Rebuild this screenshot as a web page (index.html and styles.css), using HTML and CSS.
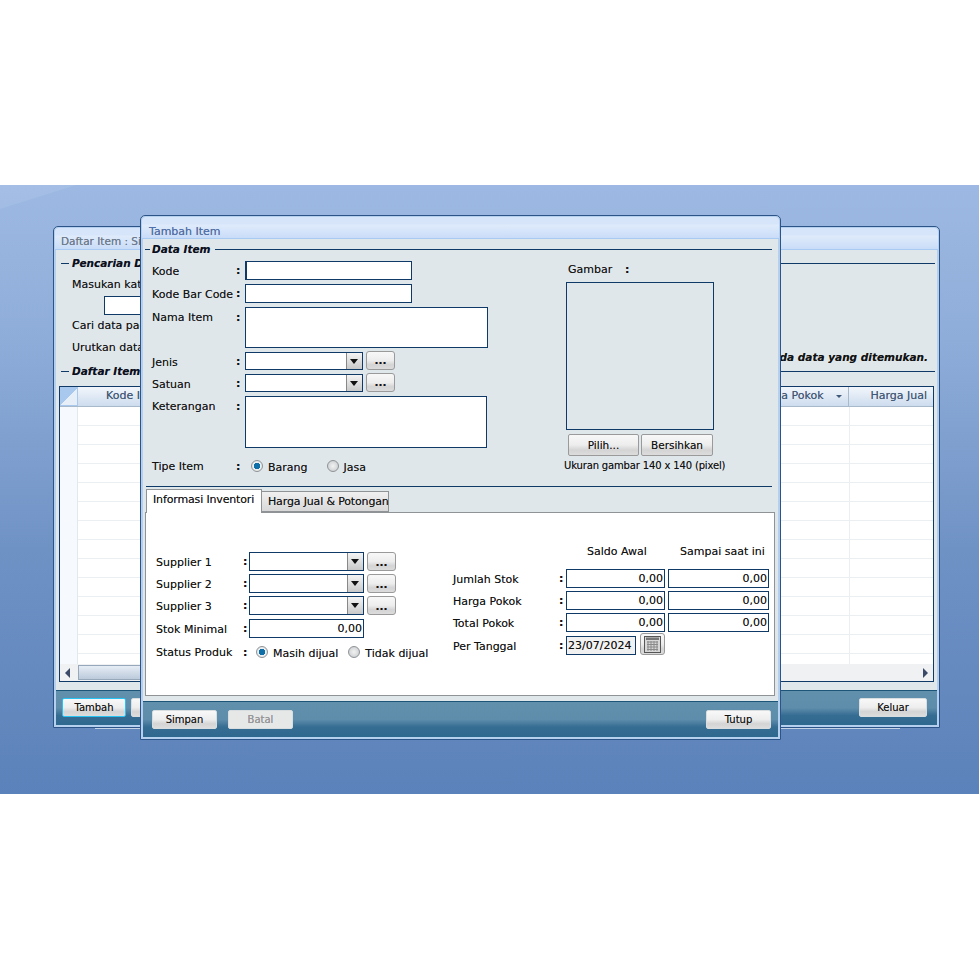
FILE: index.html
```html
<!DOCTYPE html>
<html lang="en">
<head>
    <meta charset="UTF-8">
    <title>Tambah Item</title>
    <link rel="stylesheet" href="styles.css">
</head>
<body>
    <div class="desktop">
        <div class="swoosh"></div>
        <div class="under-line"></div>

        <!-- Window behind: Daftar Item -->
        <div class="window window-back">
            <div class="titlebar">Daftar Item : Sistem</div>
            <div class="window-body">
                <div class="legend"><span>Pencarian Data</span></div>
                <div class="search-area">
                    <div class="search-label">Masukan kata kunci</div>
                    <div class="search-input"></div>
                    <div class="search-label">Cari data pada</div>
                    <div class="search-label">Urutkan data</div>
                    <div class="no-data">Tidak ada data yang ditemukan.</div>
                </div>
                <div class="legend"><span>Daftar Item</span></div>
                <div class="grid">
                    <div class="grid-head">
                        <div class="corner"></div>
                        <div class="head-cell head-kode">Kode Item</div>
                        <div class="head-cell head-pokok">Harga Pokok <i class="sort"></i></div>
                        <div class="head-cell head-jual">Harga Jual</div>
                    </div>
                    <div class="grid-body">
                        <div class="col-num"></div>
                        <div class="col-main"></div>
                        <div class="col-jual"></div>
                    </div>
                    <div class="scrollbar">
                        <i class="arrow-left"></i>
                        <div class="thumb"></div>
                        <i class="arrow-right"></i>
                    </div>
                </div>
            </div>
            <div class="footer">
                <button class="btn btn-active">Tambah</button>
                <button class="btn">Ubah</button>
                <button class="btn btn-keluar">Keluar</button>
            </div>
        </div>

        <!-- Front window: Tambah Item -->
        <div class="window window-front">
            <div class="titlebar">Tambah Item</div>
            <div class="window-body">
                <div class="legend"><span>Data Item</span></div>
                <div class="data-item">
                    <div class="data-form">
                        <div class="row row-19"><label>Kode</label><b>:</b><div class="input input-short has-caret"></div></div>
                        <div class="row row-19"><label>Kode Bar Code</label><b>:</b><div class="input input-short"></div></div>
                        <div class="row row-41"><label>Nama Item</label><b>:</b><div class="input input-wide"></div></div>
                        <div class="row row-18">
                            <label>Jenis</label><b>:</b>
                            <div class="combo"><i class="combo-btn"></i></div>
                            <button class="btn btn-dots">...</button>
                        </div>
                        <div class="row row-18">
                            <label>Satuan</label><b>:</b>
                            <div class="combo"><i class="combo-btn"></i></div>
                            <button class="btn btn-dots">...</button>
                        </div>
                        <div class="row row-52"><label>Keterangan</label><b>:</b><div class="input input-ket"></div></div>
                        <div class="row row-tipe">
                            <label>Tipe Item</label><b>:</b>
                            <span class="radio radio-on"></span><span class="radio-text">Barang</span>
                            <span class="radio radio-jasa"></span><span class="radio-text">Jasa</span>
                        </div>
                    </div>
                    <div class="picture">
                        <div class="picture-label"><span>Gambar</span><b>:</b></div>
                        <div class="picture-box"></div>
                        <div class="picture-btns">
                            <button class="btn btn-pilih">Pilih...</button>
                            <button class="btn btn-bersih">Bersihkan</button>
                        </div>
                        <div class="picture-note">Ukuran gambar 140 x 140 (pixel)</div>
                    </div>
                </div>
                <div class="separator"></div>

                <div class="tabs">
                    <div class="tab tab-active">Informasi Inventori</div>
                    <div class="tab">Harga Jual &amp; Potongan</div>
                </div>
                <div class="tab-panel">
                    <div class="panel-left">
                        <div class="row row-19"><label>Supplier 1</label><b>:</b><div class="combo combo-19"><i class="combo-btn"></i></div><button class="btn btn-dots">...</button></div>
                        <div class="row row-19"><label>Supplier 2</label><b>:</b><div class="combo combo-19"><i class="combo-btn"></i></div><button class="btn btn-dots">...</button></div>
                        <div class="row row-19 row-gap"><label>Supplier 3</label><b>:</b><div class="combo combo-19"><i class="combo-btn"></i></div><button class="btn btn-dots">...</button></div>
                        <div class="row row-19"><label>Stok Minimal</label><b>:</b><div class="input input-num input-stok">0,00</div></div>
                        <div class="row row-status">
                            <label>Status Produk</label><b>:</b>
                            <span class="radio radio-on"></span><span class="radio-text">Masih dijual</span>
                            <span class="radio radio-tidak"></span><span class="radio-text">Tidak dijual</span>
                        </div>
                    </div>
                    <div class="panel-right">
                        <div class="stock-head"><span class="head-awal">Saldo Awal</span><span class="head-kini">Sampai saat ini</span></div>
                        <div class="row row-19"><label>Jumlah Stok</label><b>:</b><div class="input input-num input-awal">0,00</div><div class="input input-num input-kini">0,00</div></div>
                        <div class="row row-19"><label>Harga Pokok</label><b>:</b><div class="input input-num input-awal">0,00</div><div class="input input-num input-kini">0,00</div></div>
                        <div class="row row-19 row-gap"><label>Total Pokok</label><b>:</b><div class="input input-num input-awal">0,00</div><div class="input input-num input-kini">0,00</div></div>
                        <div class="row row-19">
                            <label>Per Tanggal</label><b>:</b>
                            <div class="input input-date">23/07/2024</div>
                            <button class="btn btn-cal">
                                <svg width="17" height="17" viewBox="0 0 17 17">
                                    <rect x="0.5" y="0.5" width="16" height="16" fill="#d8d8d8" stroke="#555"/>
                                    <rect x="2" y="1.5" width="13" height="2.5" fill="#777"/>
                                    <path d="M3 6h11M3 8.5h11M3 11h11M3 13.5h11M4 5v10M7 5v10M10 5v10M13 5v10" stroke="#8a8a8a" stroke-width="1" fill="none"/>
                                </svg>
                            </button>
                        </div>
                    </div>
                </div>
            </div>
            <div class="footer">
                <button class="btn">Simpan</button>
                <button class="btn btn-disabled">Batal</button>
                <button class="btn btn-tutup">Tutup</button>
            </div>
        </div>
    </div>
</body>
</html>
```

FILE: styles.css
```css
* {
    box-sizing: border-box;
}

body {
    margin: 0;
    background: #fff;
    font-family: "DejaVu Sans", sans-serif;
    font-size: 11px;
    color: #111;
    text-shadow: 0 0 0.4px rgba(0, 0, 0, 0.45);
}

.desktop {
    position: relative;
    height: 609px;
    margin-top: 185px;
    overflow: hidden;
    background: linear-gradient(#9db9e3 0%, #8fadd9 25%, #6f92c5 60%, #5b82ba 100%);
}

.swoosh {
    position: absolute;
    left: 0;
    top: 0;
    width: 76px;
    height: 24px;
    background: rgba(255, 255, 255, 0.08);
    clip-path: polygon(0 0, 100% 0, 0 100%);
}

.under-line {
    position: absolute;
    left: 95px;
    top: 543px;
    width: 805px;
    height: 1px;
    background: #c4d2e6;
}

.window {
    position: absolute;
    display: flex;
    flex-direction: column;
    background: #e0e7eb;
    border: 1px solid #2c5488;
    border-radius: 5px 5px 0 0;
    box-shadow: inset 0 0 0 2px #b5cfee;
}

.window-back {
    left: 53px;
    top: 41px;
    width: 887px;
    height: 502px;
}

.window-front {
    left: 140px;
    top: 30px;
    width: 641px;
    height: 525px;
}

.titlebar {
    flex: none;
    height: 22px;
    margin: 1px 1px 0;
    padding: 6px 6px 0;
    border-bottom: 1px solid #a9caf3;
    border-radius: 4px 4px 0 0;
    background: linear-gradient(#d6e5fa 0, #d6e5fa 7px, #dfebfb 8px, #c9dcf8 100%);
    color: #6f7c8e;
    font-size: 10.5px;
    line-height: 14px;
    white-space: nowrap;
}

.window-front .titlebar {
    padding: 8px 7px 0;
    color: #4f70ae;
    font-size: 11px;
}

.window-body {
    flex: 1;
    min-height: 0;
    padding: 0 3px 0 4px;
}

.legend {
    display: flex;
    align-items: center;
    gap: 3px;
    height: 14px;
    font-weight: bold;
    font-style: italic;
    font-size: 10.5px;
    color: #0a0f20;
}

.legend::before {
    content: "";
    flex: none;
    width: 8px;
    height: 1px;
    background: #0f3a68;
}

.legend::after {
    content: "";
    flex: 1;
    height: 1px;
    margin-left: 2px;
    background: #0f3a68;
}

.window-front .legend {
    gap: 2px;
    margin: 3px 5px 0 0;
}

.window-front .legend::before {
    width: 5px;
}

/* back window */
.window-back .window-body {
    padding: 0 4px 0 7px;
}

.window-back .legend:first-child {
    margin-top: 6px;
}

.search-area {
    position: relative;
    height: 94px;
    padding: 4px 0 0 11px;
}

.search-label {
    height: 22px;
    line-height: 22px;
    white-space: nowrap;
}

.search-input {
    width: 150px;
    height: 19px;
    margin-left: 32px;
    background: #fff;
    border: 1px solid #0f3a68;
}

.no-data {
    position: absolute;
    right: 7px;
    top: 81px;
    font-size: 10.5px;
    font-weight: bold;
    font-style: italic;
}

.grid {
    display: flex;
    flex-direction: column;
    height: 296px;
    width: 875px;
    margin: 8px 0 0 -2px;
    border: 1px solid #0f3a68;
    background: #fff;
}

.grid-head {
    flex: none;
    display: flex;
    height: 20px;
    border-bottom: 1px solid #a9b9cc;
    background: linear-gradient(#f2f6fb, #cddcee);
    color: #3f5878;
    line-height: 18px;
}

.corner {
    flex: none;
    width: 18px;
    background: linear-gradient(135deg, #a9c8ee 50%, #e6eef8 50%);
    border: 1px solid #a9c8ee;
}

.head-cell {
    padding: 0 3px;
    white-space: nowrap;
}

.head-kode {
    flex: 1;
    padding-left: 28px;
}

.head-pokok {
    flex: none;
    width: 120px;
    padding-left: 26px;
    text-align: left;
    border-right: 1px solid #a9b9cc;
    overflow: hidden;
}

.sort {
    display: inline-block;
    margin-left: 9px;
    vertical-align: middle;
    border: 3px solid transparent;
    border-top-color: #3f5878;
    border-bottom: 0;
}

.head-jual {
    flex: none;
    width: 84px;
    text-align: right;
    padding-right: 6px;
}

.grid-body {
    flex: 1;
    display: flex;
    min-height: 0;
    background: repeating-linear-gradient(#fff 0, #fff 18px, #eceff2 18px, #eceff2 19px);
}

.col-num {
    flex: none;
    width: 18px;
    background: #f6f9fe;
    border-right: 1px solid #e3e8ee;
}

.col-main {
    flex: 1;
}

.col-jual {
    flex: none;
    width: 84px;
    border-left: 1px solid #eceff2;
}

.scrollbar {
    flex: none;
    display: flex;
    align-items: center;
    height: 17px;
    background: #f0f1f2;
}

.thumb {
    flex: none;
    width: 500px;
    height: 15px;
    margin-left: 8px;
    border: 1px solid #97a8bb;
    background: linear-gradient(#e6edf5, #bccadb);
}

.arrow-left {
    flex: none;
    margin-left: 5px;
    border: 5px solid transparent;
    border-left: 0;
    border-right-color: #3b4a68;
}

.arrow-right {
    flex: none;
    margin-left: auto;
    margin-right: 5px;
    border: 5px solid transparent;
    border-right: 0;
    border-left-color: #3b4a68;
}

.footer {
    position: relative;
    flex: none;
    display: flex;
    align-items: flex-start;
    height: 36px;
    margin: 0 2px 2px;
    padding: 8px 0 0 9px;
    border-top: 1px solid #1d5579;
    background: linear-gradient(#6190ad 0, #5e8dab 50%, #356c92 72%, #2f688f 100%);
}

.window-back .footer {
    height: 35px;
    padding: 7px 0 0 6px;
}

.btn {
    height: 19px;
    padding: 0;
    border: 1px solid #9a9a9a;
    border-radius: 2px;
    background: linear-gradient(#f8f8f8 0, #ededed 50%, #d4d4d4 75%, #dcdcdc 100%);
    font-family: inherit;
    font-size: 10.5px;
    color: #111;
    text-shadow: inherit;
}

.footer .btn {
    width: 65px;
    border-color: #d8dde0;
    margin-right: 11px;
    font-size: 10px;
}

.footer .btn-active {
    width: 64px;
    border: 1px solid #27c3f2;
    margin-right: 5px;
}

.footer .btn-keluar {
    width: 68px;
    margin: 0 10px 0 auto;
}

.footer .btn-tutup {
    margin: 0 7px 0 auto;
}

.footer .btn-disabled {
    background: #e6e8e8;
    color: #9a9a9a;
}

/* form rows */
.row {
    display: flex;
    align-items: center;
    margin-bottom: 3px;
}

.row-gap {
    margin-bottom: 4px;
}

.row label {
    flex: none;
    white-space: nowrap;
}

.row b {
    flex: none;
    font-weight: bold;
}

.row-19 { height: 19px; }
.row-18 { height: 18px; }
.row-41 { height: 41px; align-items: flex-start; }
.row-52 { height: 52px; align-items: flex-start; }

.input {
    flex: none;
    height: 100%;
    background: #fff;
    border: 1px solid #0f3a68;
    line-height: 17px;
    padding: 0 1px;
}

.input-short { width: 167px; }
.input-wide { width: 243px; }
.input-ket { width: 242px; }
.input-num { text-align: right; }

.has-caret {
    border-left-width: 2px;
}

.combo {
    position: relative;
    flex: none;
    width: 118px;
    height: 18px;
    background: #fff;
    border: 1px solid #0f3a68;
}

.combo-19 {
    width: 115px;
    height: 19px;
}

.combo-btn {
    position: absolute;
    right: 0;
    top: 0;
    bottom: 0;
    width: 16px;
    border-left: 1px solid #888;
    background: linear-gradient(#f4f4f4, #c9c9c9);
}

.combo-btn::after {
    content: "";
    position: absolute;
    left: 3px;
    top: 6px;
    border: 4px solid transparent;
    border-top: 5px solid #111;
    border-bottom: 0;
}

.btn-dots {
    flex: none;
    width: 29px;
    height: 19px;
    margin-left: 3px;
    border-radius: 3px;
    font-weight: bold;
    line-height: 14px;
}

/* data item */
.data-item {
    display: flex;
    height: 230px;
}

.data-form {
    flex: none;
    width: 421px;
    padding: 5px 0 0 7px;
}

.data-form .row {
    margin-bottom: 4px;
}

.data-form .row label {
    width: 84px;
}

.data-form .row b {
    width: 9px;
}

.data-form .row-19 label,
.data-form .row-18 label,
.tab-panel .row-19 label {
    padding-top: 2px;
}

.data-form .row-41 label,
.data-form .row-52 label,
.data-form .row-41 b,
.data-form .row-52 b {
    margin-top: 4px;
}

.data-form .btn-dots {
    margin-top: -2px;
}

.data-form .row-tipe {
    height: 16px;
    margin-top: 10px;
}

.radio {
    flex: none;
    width: 12px;
    height: 12px;
    border: 1px solid #8f9396;
    border-radius: 50%;
    background: radial-gradient(#f2f2f2, #c4c8ca);
}

.radio-on {
    margin-left: 6px;
    background: radial-gradient(circle, #0d6ea8 0, #0d6ea8 3px, #eef1f3 3.5px, #d2d6d8 100%);
}

.radio-text {
    flex: none;
    margin-left: 5px;
    margin-top: 2px;
}

.radio-jasa {
    margin-left: 19px;
}

.picture {
    flex: none;
    width: 180px;
}

.picture-label {
    display: flex;
    height: 26px;
    padding: 7px 0 0 2px;
}

.picture-label span {
    width: 57px;
}

.picture-box {
    width: 148px;
    height: 148px;
    border: 1px solid #0f3a68;
}

.picture-btns {
    display: flex;
    gap: 2px;
    margin: 4px 0 0 2px;
}

.btn-pilih {
    width: 71px;
    height: 22px;
}

.btn-bersih {
    width: 72px;
    height: 22px;
}

.picture-note {
    margin: 4px 0 0 -2px;
    font-size: 10px;
    letter-spacing: -0.15px;
    white-space: nowrap;
}

.separator {
    height: 1px;
    margin: 0 5px 0 1px;
    background: #0f3a68;
}

/* tabs */
.tabs {
    display: flex;
    align-items: flex-end;
    height: 25px;
    margin-left: 1px;
    position: relative;
    z-index: 1;
}

.tab {
    height: 21px;
    padding: 0 0 0 6px;
    border: 1px solid #8f9396;
    border-left: 0;
    background: linear-gradient(#f0f0f0, #d8d8d8);
    line-height: 20px;
    white-space: nowrap;
    letter-spacing: -0.15px;
}

.tab-active {
    width: 116px;
    height: 24px;
    margin-bottom: -1px;
    padding-left: 6px;
    border-left: 1px solid #8f9396;
    border-bottom: 0;
    background: #fff;
}

.tab-active + .tab {
    width: 127px;
}

.tab-panel {
    display: flex;
    height: 184px;
    margin: 0 2px 0 0;
    background: #fff;
    border: 1px solid #8f9396;
}

.panel-left {
    flex: none;
    width: 307px;
    padding: 39px 0 0 10px;
}

.panel-left .row label {
    width: 87px;
}

.panel-left .row b {
    width: 6px;
}

.input-stok {
    width: 115px;
}

.row-status {
    height: 16px;
    margin-top: 6px;
}

.panel-left .radio-on {
    margin-left: 7px;
}

.radio-tidak {
    margin-left: 10px;
}

.panel-right {
    flex: none;
    padding: 32px 0 0 0;
}

.stock-head {
    display: flex;
    height: 24px;
    padding-left: 134px;
}

.head-awal {
    width: 93px;
}

.panel-right .row label {
    width: 106px;
}

.panel-right .row b {
    width: 7px;
}

.input-awal {
    width: 99px;
    margin-right: 3px;
}

.input-kini {
    width: 101px;
}

.input-date {
    width: 70px;
    background: #f1f1f1;
    padding-left: 1px;
}

.btn-cal {
    flex: none;
    display: flex;
    align-items: center;
    justify-content: center;
    width: 25px;
    height: 22px;
    margin: -3px 0 0 4px;
    border-radius: 3px;
}
```
